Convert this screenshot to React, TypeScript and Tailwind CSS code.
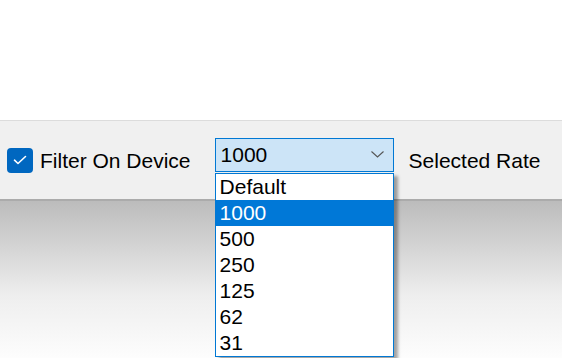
import React from 'react';

const rates = ['Default', '1000', '500', '250', '125', '62', '31'];

export default function App() {
  const selected = '1000';

  return (
    <div
      className="relative flex h-[358px] w-[562px] flex-col overflow-hidden bg-white text-black"
      style={{ fontFamily: '"Liberation Sans", Arial, sans-serif' }}
    >
      {/* Blank area above toolbar */}
      <div className="h-[120px] bg-white" />

      {/* Toolbar */}
      <div className="flex h-[79px] items-center border-t border-[#dcdcdc] bg-[#f0f0f0] pl-[7px]">
        <div className="flex h-[25px] w-[26px] items-center justify-center rounded-[4px] bg-[#0067c0]">
          <svg width="14" height="10" viewBox="0 0 14 10" fill="none">
            <path d="M1.5 5.2 L5 8.5 L12.5 1.5" stroke="white" strokeWidth="1.6" strokeLinecap="round" strokeLinejoin="round" />
          </svg>
        </div>
        <span className="ml-[7px] text-[21px] leading-none">Filter On Device</span>

        <div className="relative ml-[24px] -mt-[11px] flex h-[34px] w-[179px] items-center justify-between border border-[#0078d4] bg-[#cce4f7] pl-[5px] pr-[9px]">
          <span className="text-[21px] leading-none">{selected}</span>
          <svg width="13" height="7" viewBox="0 0 13 7" fill="none">
            <path d="M0.5 0.5 L6.5 6 L12.5 0.5" stroke="#555" strokeWidth="1.1" />
          </svg>

          {/* Open dropdown list */}
          <div className="absolute left-[-1px] top-[34px] z-10 w-[179px] border border-[#0078d4] bg-white shadow-[4px_3px_3px_rgba(0,0,0,0.35)]">
            {rates.map((r) => (
              <div
                key={r}
                className={`flex h-[26px] items-center pl-[4px] text-[21px] leading-none ${
                  r === selected ? 'bg-[#0078d7] text-white' : 'text-black'
                }`}
              >
                {r}
              </div>
            ))}
          </div>
        </div>

        <span className="ml-[15px] text-[21px] leading-none">Selected Rate</span>
      </div>

      {/* Shaded area below */}
      <div className="flex-1 border-t-2 border-[#ababab] bg-linear-to-b from-[#bcbcbc] via-[#eeeeee] via-60% to-[#fdfdfd]" />
    </div>
  );
}
